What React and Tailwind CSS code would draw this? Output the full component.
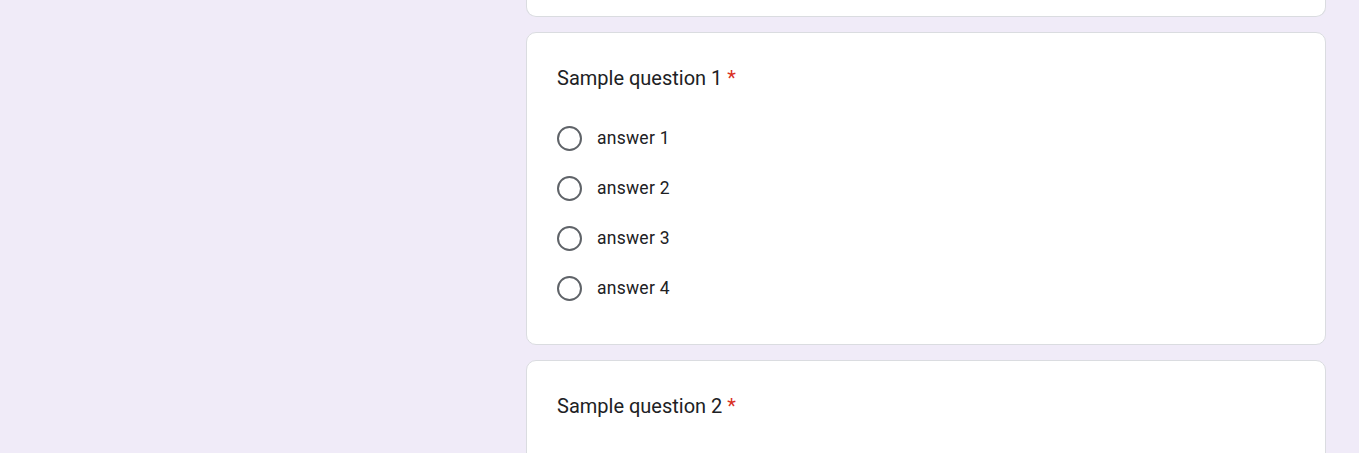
export default function App() {
  const font = { fontFamily: "Roboto, 'Liberation Sans', Arial, sans-serif" };
  const answers = ["answer 1", "answer 2", "answer 3", "answer 4"];
  return (
    <div className="min-h-[453px] h-[453px] overflow-hidden bg-[#f0ebf8] pl-[526px] pr-[33px]" style={font}>
      <div className="flex w-[800px] flex-col gap-[15px]">
        <div className="h-[17px] rounded-b-[10px] border border-t-0 border-[#dadce0] bg-white" />
        <div className="rounded-[10px] border border-[#dadce0] bg-white px-[30px] pt-[30px] pb-[31px]">
          <div className="text-[20px] leading-[30px] text-[#202124]">
            Sample question 1 <span className="text-[#d93025]">*</span>
          </div>
          <div className="mt-[20px] flex flex-col">
            {answers.map((a) => (
              <div key={a} className="flex h-[50px] items-center">
                <div className="h-[25px] w-[25px] shrink-0 rounded-full border-[2.5px] border-[#5f6368]" />
                <span className="ml-[15px] text-[17.5px] leading-[25px] tracking-[0.25px] text-[#202124]">{a}</span>
              </div>
            ))}
          </div>
        </div>
        <div className="h-[200px] rounded-[10px] border border-[#dadce0] bg-white p-[30px]">
          <div className="text-[20px] leading-[30px] text-[#202124]">
            Sample question 2 <span className="text-[#d93025]">*</span>
          </div>
        </div>
      </div>
    </div>
  );
}
